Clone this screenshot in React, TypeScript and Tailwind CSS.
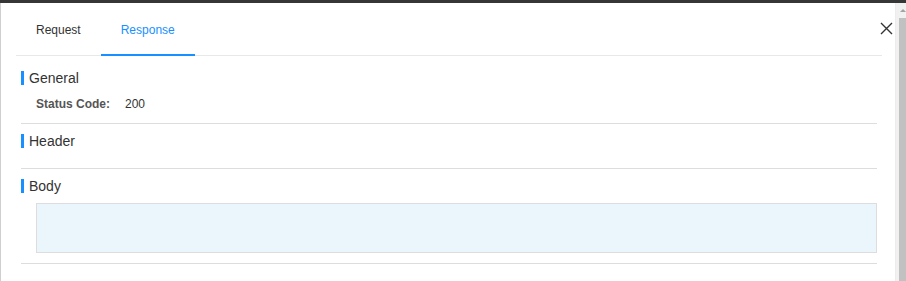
import { useState } from 'react';

type Tab = 'request' | 'response';

const font = { fontFamily: '"Liberation Sans", Arial, sans-serif' };

function SectionTitle({ title }: { title: string }) {
  return (
    <div className="flex h-[20px] items-center">
      <span className="h-[14px] w-[3px] bg-[#1890ff]" />
      <span className="ml-[5px] text-[14px] text-[#333]">{title}</span>
    </div>
  );
}

export default function App() {
  const [tab, setTab] = useState<Tab>('response');

  return (
    <div className="flex h-[281px] w-full flex-col overflow-hidden bg-white" style={font}>
      <div className="h-[3px] w-full shrink-0 bg-[#363636]" />
      <div className="flex min-h-0 flex-1">
        <div className="relative flex-1 border-l border-[#cfcfcf]">
          <button
            type="button"
            className="absolute right-[2px] top-[18px] flex h-[14px] w-[14px] items-center justify-center text-[#333]"
          >
            <svg width="13" height="13" viewBox="0 0 13 13" fill="none" stroke="currentColor" strokeWidth="1.4">
              <path d="M1 1L12 12M12 1L1 12" />
            </svg>
          </button>

          <div className="ml-[15px] mr-[13px] flex h-[53px] border-b border-[#e8e8e8]">
            {(['request', 'response'] as Tab[]).map((key) => (
              <button
                key={key}
                type="button"
                onClick={() => setTab(key)}
                className={
                  tab === key
                    ? '-mb-px flex h-[53px] items-center border-b-2 border-[#1890ff] px-[20px] pt-[3px] text-[12px] text-[#1890ff]'
                    : '-mb-px flex h-[53px] items-center border-b-2 border-transparent px-[20px] pt-[3px] text-[12px] text-[#333]'
                }
              >
                {key === 'request' ? 'Request' : 'Response'}
              </button>
            ))}
          </div>

          <div className="ml-[20px] mr-[18px] pt-[5px]">
            <section className="border-b border-[#ddd] pb-[10px] pt-[7px]">
              <SectionTitle title="General" />
              <div className="mt-[7px] flex h-[18px] items-center pl-[15px] text-[12px]">
                <span className="font-bold text-[#555]">Status Code:</span>
                <span className="ml-[15px] text-[#333]">200</span>
              </div>
            </section>
            <section className="border-b border-[#ddd] pb-[10px] pt-[7px]">
              <SectionTitle title="Header" />
              <div className="mt-[7px]" />
            </section>
            <section className="border-b border-[#ddd] pb-[10px] pt-[7px]">
              <SectionTitle title="Body" />
              <div className="ml-[15px] mt-[7px] h-[50px] border border-[#ddd] bg-[#ebf5fc]" />
            </section>
          </div>
        </div>

        <div className="flex w-[11px] shrink-0 flex-col border-l border-[#ececec] bg-[#f1f1f1]">
          <div className="flex h-[15px] items-center justify-center pl-[3px]">
            <span className="h-0 w-0 border-x-[3px] border-b-[3px] border-x-transparent border-b-[#a3a3a3]" />
          </div>
          <div className="ml-[3px] flex-1 bg-[#c1c1c1]" />
        </div>
      </div>
    </div>
  );
}
